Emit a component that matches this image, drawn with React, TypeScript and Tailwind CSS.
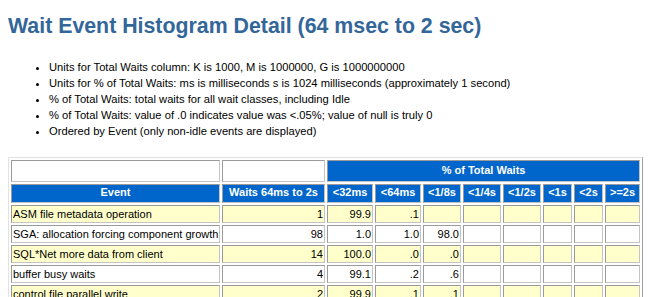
const notes = [
  'Units for Total Waits column: K is 1000, M is 1000000, G is 1000000000',
  'Units for % of Total Waits: ms is milliseconds s is 1024 milliseconds (approximately 1 second)',
  '% of Total Waits: total waits for all wait classes, including Idle',
  '% of Total Waits: value of .0 indicates value was <.05%; value of null is truly 0',
  'Ordered by Event (only non-idle events are displayed)',
];

const buckets = [
  { label: '<32ms', w: 'w-[46px]' },
  { label: '<64ms', w: 'w-[46px]' },
  { label: '<1/8s', w: 'w-[38px]' },
  { label: '<1/4s', w: 'w-[38px]' },
  { label: '<1/2s', w: 'w-[38px]' },
  { label: '<1s', w: 'w-[29px]' },
  { label: '<2s', w: 'w-[29px]' },
  { label: '>=2s', w: 'w-[35px]' },
];

const rows: { event: string; waits: string; pct: string[] }[] = [
  { event: 'ASM file metadata operation', waits: '1', pct: ['99.9', '.1'] },
  { event: 'SGA: allocation forcing component growth', waits: '98', pct: ['1.0', '1.0', '98.0'] },
  { event: 'SQL*Net more data from client', waits: '14', pct: ['100.0', '.0', '.0'] },
  { event: 'buffer busy waits', waits: '4', pct: ['99.1', '.2', '.6'] },
  { event: 'control file parallel write', waits: '2', pct: ['99.9', '.1', '.1'] },
];

const cell = 'border border-t-[#9a9a9a] border-l-[#9a9a9a] border-b-[#c4c4c4] border-r-[#c4c4c4] px-[1px] pt-[2px] pb-0 align-top text-[11px] leading-[13px] text-black overflow-hidden whitespace-nowrap';
const head = 'border border-t-[#9a9a9a] border-l-[#9a9a9a] border-b-[#c4c4c4] border-r-[#c4c4c4] bg-[#0066cc] text-white font-bold text-[11px] leading-[13px] px-0 pb-[2px] pt-0 align-middle text-center whitespace-nowrap overflow-hidden';

export default function App() {
  return (
    <div className="p-2 bg-white min-h-[297px] font-['Liberation_Sans',Arial,sans-serif]">
      <h2 className="mt-[6px] text-[21.33px] leading-[24px] font-bold text-[#336699]">
        Wait Event Histogram Detail (64 msec to 2 sec)
      </h2>

      <ul className="mt-[21px] list-disc pl-[41px] text-[11.2px] leading-[16px] text-black">
        {notes.map((n) => (
          <li key={n}>{n}</li>
        ))}
      </ul>

      <table className="mt-[18px] w-[635px] table-fixed border-separate border-spacing-[2px] border border-t-[#e2e2e2] border-l-[#e2e2e2] border-b-[#a0a0a0] border-r-[#a0a0a0]">
        <colgroup>
          <col className="w-[209px]" />
          <col className="w-[103px]" />
          {buckets.map((b) => (
            <col key={b.label} className={b.w} />
          ))}
        </colgroup>
        <thead>
          <tr className="h-[22px]">
            <td className={cell + ' bg-white'}></td>
            <td className={cell + ' bg-white'}></td>
            <th colSpan={8} className={head}>% of Total Waits</th>
          </tr>
          <tr className="h-[19px]">
            <th className={head}>Event</th>
            <th className={head}>Waits 64ms to 2s</th>
            {buckets.map((b) => (
              <th key={b.label} className={head}>{b.label}</th>
            ))}
          </tr>
        </thead>
        <tbody>
          {rows.map((r, i) => {
            const bg = i % 2 === 0 ? ' bg-[#ffffcc]' : ' bg-white';
            return (
              <tr key={r.event} className="h-[18px]">
                <td className={cell + bg}>{r.event}</td>
                <td className={cell + bg + ' text-right'}>{r.waits}</td>
                {buckets.map((b, j) => (
                  <td key={b.label} className={cell + bg + ' text-right'}>{r.pct[j] ?? ''}</td>
                ))}
              </tr>
            );
          })}
        </tbody>
      </table>
    </div>
  );
}
